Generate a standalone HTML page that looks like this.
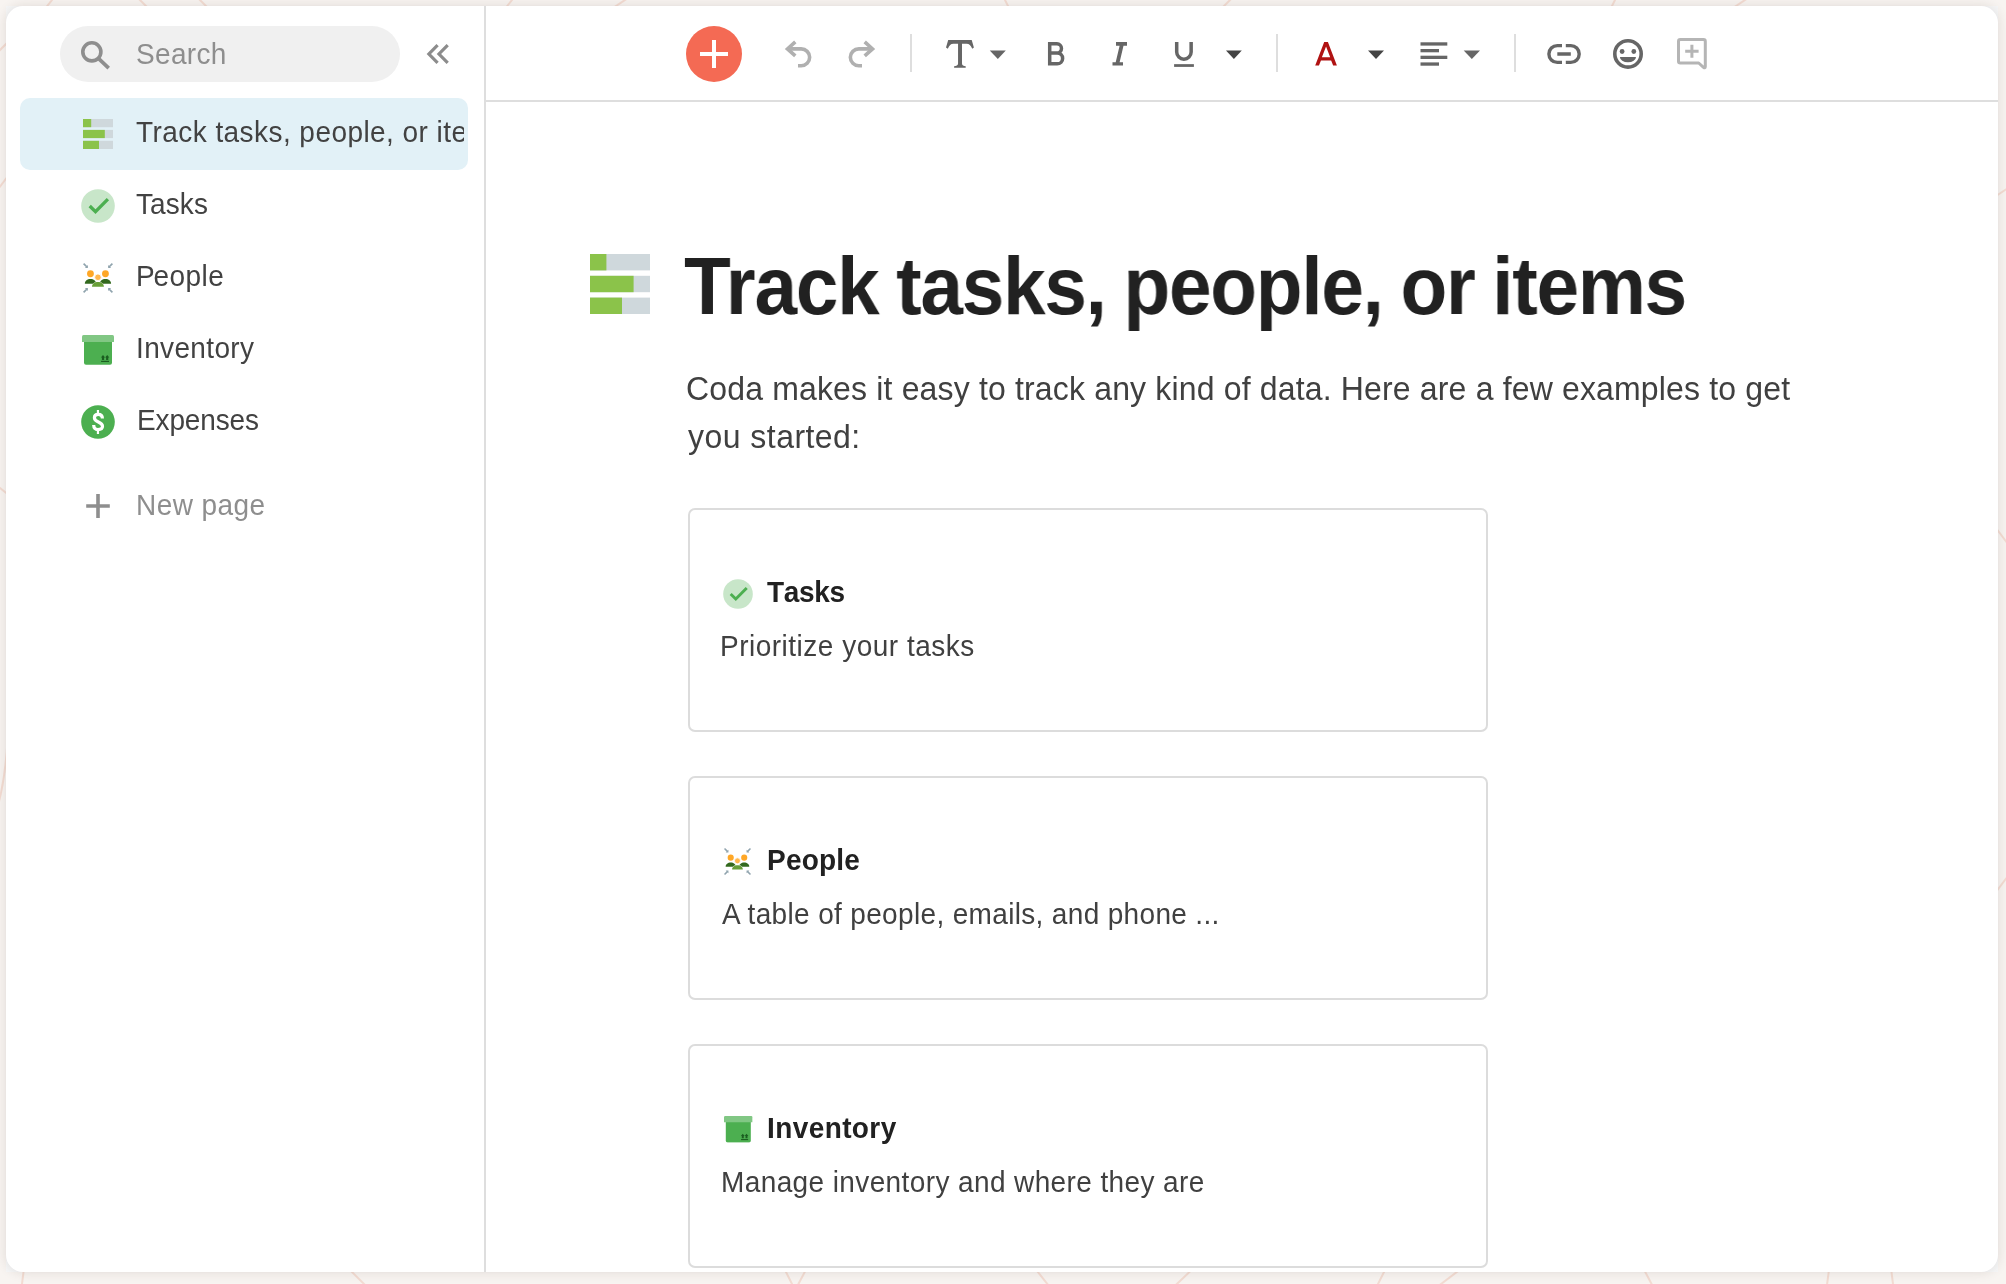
<!DOCTYPE html>
<html>
<head>
<meta charset="utf-8">
<title>Track tasks, people, or items</title>
<style>
*{box-sizing:border-box;margin:0;padding:0}
html,body{width:2006px;height:1284px;overflow:hidden}
body{background:#f8f4f1;font-family:"Liberation Sans",sans-serif;position:relative}
.abs{position:absolute}
#bg{position:absolute;left:0;top:0;width:2006px;height:1284px}
#win{position:absolute;left:6px;top:6px;width:1992px;height:1266px;background:#fff;border-radius:17px;box-shadow:0 0 12px rgba(45,30,22,.125)}
#sideline{position:absolute;left:484px;top:6px;width:2px;height:1266px;background:#dedede}
#topline{position:absolute;left:486px;top:100px;width:1512px;height:2px;background:#dedede}
.t{position:absolute;white-space:nowrap;line-height:1;transform-origin:0 84.65%;will-change:transform;transform:scaleY(1.045)}
#search{position:absolute;left:60px;top:26px;width:340px;height:56px;border-radius:28px;background:#f0f0f0}
#sel{position:absolute;left:20px;top:98px;width:448px;height:72px;border-radius:10px;background:#e2f1f7}
.side{font-size:28px;color:#424242}
.card{position:absolute;left:688px;width:800px;height:224px;border:2px solid #dcdcdc;border-radius:7px;background:#fff}
.ct{font-size:28px;font-weight:bold;color:#212121}
.cd{font-size:28px;color:#404040}
.sep{position:absolute;top:34px;width:2px;height:38px;background:#dedede}
svg{position:absolute;overflow:visible}
</style>
</head>
<body>

<svg width="0" height="0" style="position:absolute">
<defs>
<symbol id="i-bars" viewBox="0 0 30 30">
  <rect x="0" y="0" width="30" height="8.2" fill="#cfd8dc"/><rect x="0" y="0" width="8.2" height="8.2" fill="#8bc34a"/>
  <rect x="0" y="10.9" width="30" height="8.2" fill="#cfd8dc"/><rect x="0" y="10.9" width="21.8" height="8.2" fill="#8bc34a"/>
  <rect x="0" y="21.8" width="30" height="8.2" fill="#cfd8dc"/><rect x="0" y="21.8" width="16" height="8.2" fill="#8bc34a"/>
</symbol>
<symbol id="i-check" viewBox="0 0 34 34">
  <circle cx="17" cy="17" r="16.8" fill="#c8e6c9"/>
  <polyline points="8.7,17 14.5,22.7 26.9,10.2" fill="none" stroke="#4caf50" stroke-width="3.3"/>
</symbol>
<symbol id="i-people" viewBox="0 0 30 30">
  <g stroke="#90a4ae" stroke-width="1.7" fill="#90a4ae">
    <path d="M0.6 0.6L4 4" /><path d="M4.9 1.9L4.9 4.9L1.9 4.9Z" stroke="none"/>
    <path d="M29.4 0.6L26 4" /><path d="M25.1 1.9L25.1 4.9L28.1 4.9Z" stroke="none"/>
    <path d="M0.6 29.4L4 26" /><path d="M4.9 28.1L4.9 25.1L1.9 25.1Z" stroke="none"/>
    <path d="M29.4 29.4L26 26" /><path d="M25.1 28.1L25.1 25.1L28.1 25.1Z" stroke="none"/>
  </g>
  <circle cx="7.45" cy="10.75" r="3.4" fill="#ffa726"/>
  <circle cx="22.45" cy="10.75" r="3.4" fill="#ffa726"/>
  <path d="M1.8 20.7 C1.8 17.8 4.3 16 7.45 16 C10.6 16 13.1 17.8 13.1 20.7Z" fill="#33691e"/>
  <path d="M16.8 20.7 C16.8 17.8 19.3 16 22.45 16 C25.6 16 28.1 17.8 28.1 20.7Z" fill="#33691e"/>
  <circle cx="14.95" cy="14.25" r="3.3" fill="#ffb74d" stroke="#fff" stroke-width=".9"/>
  <path d="M9 23.8 C9 20.9 11.6 19.1 14.95 19.1 C18.3 19.1 20.9 20.9 20.9 23.8Z" fill="#689f38" stroke="#fff" stroke-width=".9" paint-order="stroke"/>
</symbol>
<symbol id="i-box" viewBox="0 0 32 30">
  <path d="M2 6H30V27.8Q30 29.8 28 29.8H4Q2 29.8 2 27.8Z" fill="#4caf50"/>
  <path d="M0 7V1.5Q0 0 1.5 0H30.5Q32 0 32 1.5V7Z" fill="#81c784"/>
  <g fill="#1b5e20"><path d="M18.9 22.5L21 19.9L23.1 22.5H22.1V24.9H19.9V22.5Z"/><path d="M23.1 22.5L25.2 19.9L27.3 22.5H26.3V24.9H24.1V22.5Z"/><rect x="19.1" y="25.8" width="7.9" height="1.2"/></g>
</symbol>
<symbol id="i-dollar" viewBox="0 0 34 34">
  <circle cx="17" cy="17" r="16.8" fill="#4caf50"/>
  <path d="M21.4 13.5C21.4 10.8 19.7 9.4 17.2 9.4C14.9 9.4 13.4 10.7 13.4 12.7C13.4 15 15.3 16 17.4 17C19.8 18.1 21.5 19.1 21.5 21.3C21.5 23.4 19.6 24.6 16.9 24.6C14.2 24.6 12.7 23 12.7 20.1" fill="none" stroke="#fff" stroke-width="3.2"/><path d="M16.95 5V8.6M16.95 25.4V29.1" stroke="#fff" stroke-width="2.2" fill="none"/>
</symbol>
</defs>
</svg>
<svg id="bg" width="2006" height="1284" viewBox="0 0 2006 1284"><g fill="none" stroke="#f1d6cb" stroke-width="2" opacity=".8">
<path d="M60 -10L20 40M130 -10L180 40M190 -10L230 30M520 -10L480 40M640 -10L580 30M-10 60L30 20M-10 200L20 160M-10 480L15 500M-10 830Q10 780 8 700"/>
<path d="M25 1260L20 1300M340 1260L380 1300M780 1260L800 1300M810 1262L790 1300M1030 1262L1060 1300M1200 1262L1160 1300M1390 1260L1370 1300M1470 1262L1420 1300M1640 1262L1660 1300M1830 1262L1825 1300M1890 1260L1895 1300"/>
<path d="M1000 -10L1020 30M1240 -10L1200 30M1620 -10L1600 30M1760 -10L1700 30M1990 200L2020 180M1990 520L2020 560M1990 900L2020 860"/>
</g></svg>
<div style="position:absolute;left:6px;top:6px;width:1992px;height:1266px;background:linear-gradient(rgba(246,248,250,.75),rgba(246,248,250,.75)) 0 0/17px 17px no-repeat,linear-gradient(rgba(246,248,250,.75),rgba(246,248,250,.75)) 100% 0/17px 17px no-repeat,linear-gradient(rgba(246,248,250,.75),rgba(246,248,250,.75)) 0 100%/17px 17px no-repeat,linear-gradient(rgba(246,248,250,.75),rgba(246,248,250,.75)) 100% 100%/17px 17px no-repeat"></div>
<div id="win"></div>
<div id="sideline"></div>
<div id="topline"></div>

<!-- SIDEBAR -->
<div id="search"></div>
<div id="sel"></div>

<svg style="left:78px;top:38px" width="34" height="34" viewBox="0 0 34 34"><circle cx="13.85" cy="13.85" r="9.05" fill="none" stroke="#8e8e8e" stroke-width="3.6"/><path d="M20.4 20.4L30.7 30.2" stroke="#8e8e8e" stroke-width="3.7" fill="none"/></svg>
<div class="t" id="t-search" style="left:135.5px;top:40.5px;font-size:28px;color:#8e8e8e;letter-spacing:.33px">Search</div>
<svg style="left:420px;top:40px" width="34" height="28" viewBox="420 40 34 28"><polyline points="437.6,45.2 428.9,54 437.6,62.8" fill="none" stroke="#8c8c8c" stroke-width="3.2"/><polyline points="447.7,45.2 439,54 447.7,62.8" fill="none" stroke="#8c8c8c" stroke-width="3.2"/></svg>

<svg style="left:83px;top:119px" width="30" height="30"><use href="#i-bars"/></svg>
<div class="t side" id="t-s1" style="left:136.3px;top:118.5px;width:327.7px;overflow:hidden;letter-spacing:.44px">Track tasks, people, or items</div>
<svg style="left:81px;top:189px" width="34" height="34"><use href="#i-check"/></svg>
<div class="t side" id="t-s2" style="left:136.3px;top:190.5px;letter-spacing:.1px">Tasks</div>
<svg style="left:83px;top:263px" width="30" height="30"><use href="#i-people"/></svg>
<div class="t side" id="t-s3" style="left:136.3px;top:262.5px;letter-spacing:.44px"><span style="letter-spacing:-1.2px">P</span>eople</div>
<svg style="left:82px;top:335px" width="32" height="30"><use href="#i-box"/></svg>
<div class="t side" id="t-s4" style="left:136.3px;top:334.5px;letter-spacing:.35px">Inventory</div>
<svg style="left:81px;top:405px" width="34" height="34"><use href="#i-dollar"/></svg>
<div class="t side" id="t-s5" style="left:136.7px;top:406.5px;letter-spacing:-.15px">Expenses</div>
<svg style="left:86px;top:494px" width="24" height="24" viewBox="0 0 24 24"><path d="M12 0.1V23.9M0.2 12H23.8" stroke="#8e8e8e" stroke-width="3.6" fill="none"/></svg>
<div class="t" id="t-s6" style="left:135.9px;top:492px;font-size:28px;color:#8e8e8e;letter-spacing:.43px">New page</div>

<!-- TOOLBAR -->

<svg id="tb" style="left:0;top:0" width="2006" height="102" viewBox="0 0 2006 102">
  <!-- add button -->
  <circle cx="714" cy="54" r="28" fill="#f46a54"/>
  <path d="M714 40V68M700 54H728" stroke="#fff" stroke-width="4" fill="none"/>
  <!-- undo / redo -->
  <g fill="none" stroke="#b0b0b0" stroke-width="3.6">
    <path d="M795.3 41.9L787.5 48.9L795.3 55.9"/>
    <path d="M788.5 48.9H801.2A8.45 8.45 0 0 1 801.2 65.8H798"/>
    <path d="M864.7 41.9L872.5 48.9L864.7 55.9"/>
    <path d="M871.5 48.9H858.8A8.45 8.45 0 0 0 858.8 65.8H862"/>
  </g>
  <rect x="910" y="34" width="2" height="38" fill="#dedede"/>
  <!-- T -->
  <path fill="#666" d="M948.2 40H971.7L973.9 47.5L972.3 48.7C970.5 45.5 969.5 43.76 966.5 43.76H962V63.5C962 65.3 963.5 66.1 965.7 66.3V67.7H954.1V66.3C956.3 66.1 958.05 65.3 958.05 63.5V43.76H953.5C950.5 43.76 949.5 45.5 947.8 48.7L946 47.5Z"/>
  <path fill="#666" d="M989.8 50.5H1005.8L997.8 58.9Z"/>
  <!-- B -->
  <path fill="none" stroke="#666" stroke-width="3.5" d="M1049.7 42.1V65.6M1049.7 43.85H1056.9A4.575 4.575 0 0 1 1056.9 53H1049.7M1049.7 53H1057.2A5.425 5.425 0 0 1 1057.2 63.85H1049.7"/>
  <!-- I -->
  <path fill="#666" d="M1116 42.1H1127V45.8H1123.5L1119.6 62.2H1123V65.6H1112.5V62.2H1115.7L1119.6 45.8H1116Z"/>
  <!-- U -->
  <path fill="none" stroke="#666" stroke-width="3.5" d="M1176.7 42.1V51.9A7.225 7.225 0 0 0 1191.15 51.9V42.1"/>
  <rect x="1174.1" y="64.15" width="19.8" height="2.75" fill="#666"/>
  <path fill="#444" d="M1226 50.4H1241.8L1233.9 58.9Z"/>
  <rect x="1276" y="34" width="2" height="38" fill="#dedede"/>
  <!-- A -->
  <path fill="#b01212" fill-rule="evenodd" d="M1324.2 42.1H1327.9L1336.9 65.6H1333.15L1331.15 60.4H1320.95L1318.95 65.6H1315.2ZM1326.05 46.6L1330.2 57.2H1321.9Z"/>
  <path fill="#444" d="M1368 50.4H1384L1376 58.9Z"/>
  <!-- align -->
  <g fill="#666"><rect x="1420.5" y="42.3" width="26.8" height="3.3"/><rect x="1420.5" y="49" width="18.5" height="3.3"/><rect x="1420.5" y="55.7" width="26.8" height="3.3"/><rect x="1420.5" y="62.4" width="18.5" height="3.3"/></g>
  <path fill="#666" d="M1463.7 50.4H1480L1471.85 58.9Z"/>
  <rect x="1514" y="34" width="2" height="38" fill="#dedede"/>
  <!-- link -->
  <g fill="none" stroke="#666" stroke-width="3.4">
    <path d="M1562 45.6H1557.3A8.4 8.4 0 0 0 1557.3 62.4H1562"/>
    <path d="M1565.8 45.6H1570.8A8.4 8.4 0 0 1 1570.8 62.4H1565.8"/>
    <path d="M1557.3 54H1570.8" stroke-width="3.5"/>
  </g>
  <!-- smiley -->
  <circle cx="1628" cy="53.9" r="13.2" fill="none" stroke="#666" stroke-width="3.6"/>
  <circle cx="1622.1" cy="51.5" r="2.4" fill="#666"/><circle cx="1633.8" cy="51.5" r="2.4" fill="#666"/>
  <path fill="#666" d="M1619.9 56.9H1636A8.05 5.3 0 0 1 1619.9 56.9Z"/>
  <!-- comment -->
  <path fill="none" stroke="#b5b5b5" stroke-width="3" stroke-linejoin="round" d="M1680.3 39.6H1703.5Q1705.3 39.6 1705.3 41.4V66.4Q1705.3 68.7 1703.5 67.3L1698.7 63H1680.3Q1678.5 63 1678.5 61.2V41.4Q1678.5 39.6 1680.3 39.6Z"/>
  <path fill="none" stroke="#b5b5b5" stroke-width="3" d="M1691.9 44.8V57.8M1685.2 51.3H1698.6"/>
</svg>

<!-- CONTENT -->

<svg style="left:590px;top:254px" width="60" height="60"><use href="#i-bars"/></svg>
<div class="t" id="t-title" style="left:684.2px;top:245.2px;font-size:82px;font-weight:bold;color:#212121;letter-spacing:-1.31px;word-spacing:-2.6px;transform:scaleX(.9335)"><span style="letter-spacing:-5.3px">T</span>rack tasks, people, or items</div>
<div class="t" id="t-p1" style="left:685.8px;top:373.2px;font-size:32px;color:#404040;letter-spacing:.16px">Coda makes it easy to track any kind of data. Here are a few examples to get</div>
<div class="t" id="t-p2" style="left:688.1px;top:421px;font-size:32px;color:#404040;letter-spacing:.46px">you started:</div>

<div class="card" style="top:508px"></div>
<svg style="left:723px;top:579px" width="30" height="30"><use href="#i-check"/></svg>
<div class="t ct" id="t-c1" style="left:766.8px;top:578.9px;letter-spacing:-.3px"><span style="letter-spacing:-.4px">T</span>asks</div>
<div class="t cd" id="t-d1" style="left:719.8px;top:633.3px;letter-spacing:.5px">Prioritize your tasks</div>

<div class="card" style="top:776px"></div>
<svg style="left:724.4px;top:848.1px" width="27" height="27"><use href="#i-people"/></svg>
<div class="t ct" id="t-c2" style="left:766.6px;top:846.9px;letter-spacing:.2px">People</div>
<div class="t cd" id="t-d2" style="left:722.3px;top:901.3px;letter-spacing:.34px">A table of people, emails, and phone ...</div>

<div class="card" style="top:1044px"></div>
<svg style="left:723.6px;top:1116.3px" width="28.6" height="26.8"><use href="#i-box"/></svg>
<div class="t ct" id="t-c3" style="left:766.6px;top:1114.9px;letter-spacing:.4px">Inventory</div>
<div class="t cd" id="t-d3" style="left:720.8px;top:1169.3px;letter-spacing:.39px">Manage inventory and where they are</div>

</body>
</html>
